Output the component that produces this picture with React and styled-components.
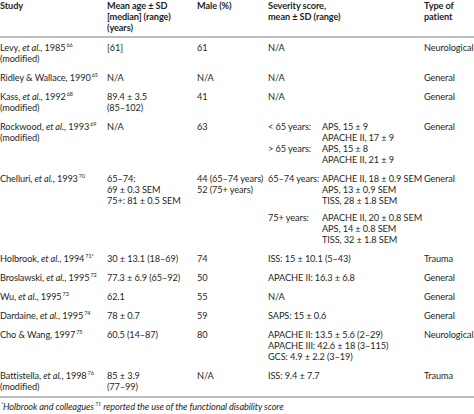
import React from "react";
import styled, { createGlobalStyle } from "styled-components";

const GlobalStyle = createGlobalStyle`
  html, body {
    margin: 0;
    padding: 0;
    background: #ffffff;
    overflow: hidden;
  }
  body {
    font-family: Lato, "Open Sans", sans-serif;
    color: #1f1f1f;
  }
`;

const COLS = "107px 90px 71px 156px 70px";

const Page = styled.div`
  width: 500px;
`;

const Row = styled.div`
  display: grid;
  grid-template-columns: ${COLS};
  padding: 4px 0;
  font-size: 9.2px;
  letter-spacing: -0.1px;
  line-height: 11px;
`;

const HeadRow = styled(Row)`
  padding: 0 0 3px;
  font-weight: 700;
  border-bottom: 2px solid #bdbdbd;
`;

const Cell = styled.div`
  white-space: nowrap;
`;

const Lines = styled.div`
  display: flex;
  flex-direction: column;
  gap: ${(p) => p.$gap || 0}px;
`;

const SubGrid = styled.div`
  display: grid;
  grid-template-columns: 54px 1fr;
  row-gap: ${(p) => p.$gap || 0}px;
  white-space: nowrap;
`;

const Em = styled.i`
  font-style: italic;
`;

const Sup = styled.sup`
  font-size: 5.5px;
  line-height: 0;
  vertical-align: 4px;
  margin-left: 1px;
`;

const BottomRule = styled.div`
  border-top: 2px solid #bdbdbd;
`;

const Footnote = styled.p`
  margin: 0;
  padding-top: 3px;
  font-size: 9.2px;
  letter-spacing: -0.1px;
  line-height: 12px;
  font-style: italic;
  white-space: nowrap;
`;

const Ref = ({ author, etal, year, sup }) => (
  <>
    {author}
    {etal && (
      <>
        , <Em>et al.</Em>
      </>
    )}
    , {year}
    <Sup>{sup}</Sup>
  </>
);

const rows = [
  {
    study: [<Ref author="Levy" etal year="1985" sup="66" />, "(modified)"],
    age: ["[61]"],
    male: ["61"],
    sev: ["N/A"],
    type: "Neurological",
  },
  {
    study: [<Ref author="Ridley & Wallace" year="1990" sup="65" />],
    age: ["N/A"],
    male: ["N/A"],
    sev: ["N/A"],
    type: "General",
  },
  {
    study: [<Ref author="Kass" etal year="1992" sup="68" />, "(modified)"],
    age: ["89.4 ± 3.5", "(85–102)"],
    male: ["41"],
    sev: ["N/A"],
    type: "General",
  },
  {
    study: [<Ref author="Rockwood" etal year="1993" sup="69" />, "(modified)"],
    age: ["N/A"],
    male: ["63"],
    groups: [
      { label: "< 65 years:", values: ["APS, 15 ± 9", "APACHE II, 17 ± 9"] },
      { label: "> 65 years:", values: ["APS, 15 ± 8", "APACHE II, 21 ± 9"] },
    ],
    type: "General",
  },
  {
    study: [<Ref author="Chelluri" etal year="1993" sup="70" />],
    age: ["65–74:", "69 ± 0.3 SEM", "75+: 81 ± 0.5 SEM"],
    male: ["44 (65–74 years)", "52 (75+ years)"],
    groups: [
      {
        label: "65–74 years:",
        values: ["APACHE II, 18 ± 0.9 SEM", "APS, 13 ± 0.9 SEM", "TISS, 28 ± 1.8 SEM"],
      },
      {
        label: "75+ years:",
        values: ["APACHE II, 20 ± 0.8 SEM", "APS, 14 ± 0.8 SEM", "TISS, 32 ± 1.8 SEM"],
      },
    ],
    groupGap: 6,
    type: "General",
  },
  {
    study: [<Ref author="Holbrook" etal year="1994" sup="71*" />],
    age: ["30 ± 13.1 (18–69)"],
    male: ["74"],
    sev: ["ISS: 15 ± 10.1 (5–43)"],
    type: "Trauma",
  },
  {
    study: [<Ref author="Broslawski" etal year="1995" sup="72" />],
    age: ["77.3 ± 6.9 (65–92)"],
    male: ["50"],
    sev: ["APACHE II: 16.3 ± 6.8"],
    type: "General",
  },
  {
    study: [<Ref author="Wu" etal year="1995" sup="73" />],
    age: ["62.1"],
    male: ["55"],
    sev: ["N/A"],
    type: "General",
  },
  {
    study: [<Ref author="Dardaine" etal year="1995" sup="74" />],
    age: ["78 ± 0.7"],
    male: ["59"],
    sev: ["SAPS: 15 ± 0.6"],
    type: "General",
  },
  {
    study: [<Ref author="Cho & Wang" year="1997" sup="75" />],
    age: ["60.5 (14–87)"],
    male: ["80"],
    sev: ["APACHE II: 13.5 ± 5.6 (2–29)", "APACHE III: 42.6 ± 18 (3–115)", "GCS: 4.9 ± 2.2 (3–19)"],
    type: "Neurological",
  },
  {
    study: [<Ref author="Battistella" etal year="1998" sup="76" />, "(modified)"],
    age: ["85 ± 3.9", "(77–99)"],
    male: ["N/A"],
    sev: ["ISS: 9.4 ± 7.7"],
    type: "Trauma",
  },
];

function LineList({ items }) {
  return (
    <Lines>
      {items.map((t, i) => (
        <span key={i}>{t}</span>
      ))}
    </Lines>
  );
}

function Severity({ row }) {
  if (!row.groups) return <LineList items={row.sev} />;
  return (
    <SubGrid $gap={row.groupGap}>
      {row.groups.map((g) => (
        <React.Fragment key={g.label}>
          <span>{g.label}</span>
          <LineList items={g.values} />
        </React.Fragment>
      ))}
    </SubGrid>
  );
}

export default function App() {
  return (
    <Page>
      <GlobalStyle />
      <HeadRow>
        <Cell>Study</Cell>
        <Cell>
          <LineList items={["Mean age ± SD", "[median] (range)", "(years)"]} />
        </Cell>
        <Cell>Male (%)</Cell>
        <Cell>
          <LineList items={["Severity score,", "mean ± SD (range)"]} />
        </Cell>
        <Cell>
          <LineList items={["Type of", "patient"]} />
        </Cell>
      </HeadRow>
      {rows.map((r, i) => (
        <Row key={i}>
          <Cell>
            <LineList items={r.study} />
          </Cell>
          <Cell>
            <LineList items={r.age} />
          </Cell>
          <Cell>
            <LineList items={r.male} />
          </Cell>
          <Cell>
            <Severity row={r} />
          </Cell>
          <Cell>{r.type}</Cell>
        </Row>
      ))}
      <BottomRule />
      <Footnote>
        <Sup>*</Sup>Holbrook and colleagues<Sup>71</Sup> reported the use of the functional disability score
      </Footnote>
    </Page>
  );
}
